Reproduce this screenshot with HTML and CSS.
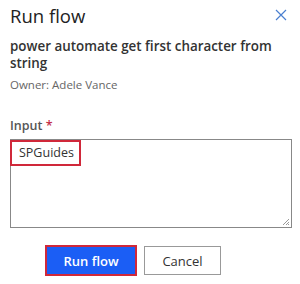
FILE: index.html
```html
<!DOCTYPE html>
<html lang="en">
<head>
    <meta charset="UTF-8">
    <title>Run flow</title>
    <link rel="stylesheet" href="styles.css">
</head>
<body>
<div class="panel">
    <div class="head">
        <h1 class="title">Run flow</h1>
        <svg class="close" width="12" height="12" viewBox="0 0 12 12">
            <path d="M1 1 L11 11 M11 1 L1 11" stroke="#4a7fd0" stroke-width="1.2" fill="none"/>
        </svg>
    </div>
    <div class="flowName">power automate get first character from string</div>
    <div class="owner">Owner: Adele Vance</div>

    <div class="label">Input <span class="req">*</span></div>
    <div class="area">
        <span class="mark">SPGuides</span>
        <svg class="grip" width="8" height="8" viewBox="0 0 8 8">
            <path d="M7 1 L1 7 M7 4 L4 7 M7 6 L6 7" stroke="#999" stroke-width="1"/>
        </svg>
    </div>

    <div class="buttons">
        <button class="btnRun">Run flow</button>
        <button class="btnCancel">Cancel</button>
    </div>
</div>
</body>
</html>
```
FILE: styles.css
```css
body {
    margin: 0;
    background-color: #fff;
    font-family: "Open Sans", "Noto Sans", sans-serif;
    color: #222;
}

.panel {
    padding: 2px 8px 0 10px;
}

.head {
    display: flex;
    justify-content: space-between;
    align-items: center;
}

.title {
    margin: 0;
    font-size: 18.5px;
    font-weight: 400;
    line-height: 28px;
}

.close {
    margin-right: 5px;
    margin-top: -2px;
}

.flowName {
    margin-top: 8px;
    font-size: 13.4px;
    font-weight: 600;
    line-height: 17px;
    color: #333;
}

.owner {
    margin-top: 5px;
    font-size: 11.5px;
    color: #666;
}

.label {
    margin-top: 25px;
    font-size: 12.5px;
    font-weight: 600;
    color: #555;
}

.req {
    color: #c4314b;
}

.area {
    position: relative;
    margin-top: 5px;
    height: 89px;
    width: 282px;
    border: 1px solid #888;
    box-sizing: border-box;
}

.mark {
    display: inline-block;
    margin: -1px 0 0 -1px;
    padding: 3px 5px 3px 7px;
    border: 2px solid #d0283a;
    font-size: 12.5px;
    line-height: 16px;
    color: #333;
}

.grip {
    position: absolute;
    right: 1px;
    bottom: 1px;
}

.buttons {
    display: flex;
    gap: 7px;
    margin-top: 17px;
    padding-left: 35px;
}

.btnRun {
    width: 92px;
    height: 31px;
    border: 2px solid #d0283a;
    background-color: #1b5ef5;
    color: #fff;
    font-family: "Open Sans", "Noto Sans", sans-serif;
    font-size: 13px;
    font-weight: 600;
}

.btnCancel {
    width: 77px;
    height: 29px;
    margin-top: 1px;
    border: 1px solid #999;
    background-color: #fff;
    color: #333;
    font-family: "Open Sans", "Noto Sans", sans-serif;
    font-size: 13px;
}
```
